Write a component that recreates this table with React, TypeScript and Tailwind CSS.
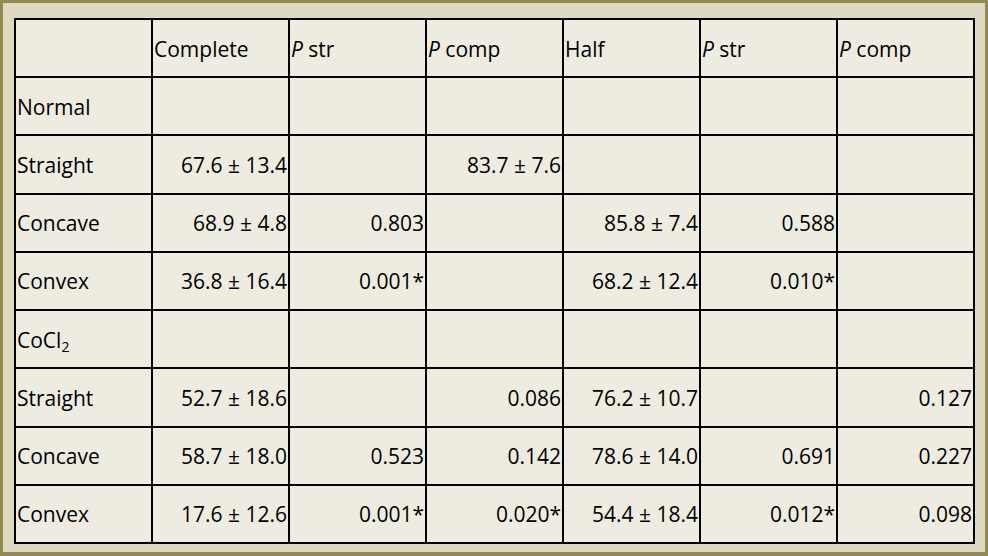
import React from "react";

type Cell = { t: React.ReactNode; r?: boolean };

const P = (s: string) => (
  <>
    <i>P</i> {s}
  </>
);

const rows: Cell[][] = [
  [{ t: "" }, { t: "Complete" }, { t: P("str") }, { t: P("comp") }, { t: "Half" }, { t: P("str") }, { t: P("comp") }],
  [{ t: "Normal" }, { t: "" }, { t: "" }, { t: "" }, { t: "" }, { t: "" }, { t: "" }],
  [{ t: "Straight" }, { t: "67.6 ± 13.4", r: true }, { t: "" }, { t: "83.7 ± 7.6", r: true }, { t: "" }, { t: "" }, { t: "" }],
  [{ t: "Concave" }, { t: "68.9 ± 4.8", r: true }, { t: "0.803", r: true }, { t: "" }, { t: "85.8 ± 7.4", r: true }, { t: "0.588", r: true }, { t: "" }],
  [{ t: "Convex" }, { t: "36.8 ± 16.4", r: true }, { t: "0.001*", r: true }, { t: "" }, { t: "68.2 ± 12.4", r: true }, { t: "0.010*", r: true }, { t: "" }],
  [
    {
      t: (
        <>
          CoCl<sub className="text-[14px] align-baseline relative top-[4px]">2</sub>
        </>
      ),
    },
    { t: "" },
    { t: "" },
    { t: "" },
    { t: "" },
    { t: "" },
    { t: "" },
  ],
  [{ t: "Straight" }, { t: "52.7 ± 18.6", r: true }, { t: "" }, { t: "0.086", r: true }, { t: "76.2 ± 10.7", r: true }, { t: "" }, { t: "0.127", r: true }],
  [{ t: "Concave" }, { t: "58.7 ± 18.0", r: true }, { t: "0.523", r: true }, { t: "0.142", r: true }, { t: "78.6 ± 14.0", r: true }, { t: "0.691", r: true }, { t: "0.227", r: true }],
  [{ t: "Convex" }, { t: "17.6 ± 12.6", r: true }, { t: "0.001*", r: true }, { t: "0.020*", r: true }, { t: "54.4 ± 18.4", r: true }, { t: "0.012*", r: true }, { t: "0.098", r: true }],
];

export default function App() {
  return (
    <div className="w-[988px] h-[556px] bg-[#948a54] pt-[3px] pl-[3px] pr-[3px] pb-[4px]">
      <div className="w-full h-full bg-[#ddd9c3] pl-[11px] pt-[15px]">
        <div
          className="grid grid-cols-[repeat(7,135px)] grid-rows-[repeat(9,56.22px)] gap-[2px] p-[2px] bg-black w-[961px] text-[21px] text-black"
          style={{ fontFamily: "'Open Sans', Lato, sans-serif" }}
        >
          {rows.flatMap((row, i) =>
            row.map((c, j) => (
              <div
                key={`${i}-${j}`}
                className={`bg-[#eeece1] flex items-center px-[1px] leading-none ${c.r ? "justify-end" : "justify-start"}`}
              >
                <span className="whitespace-nowrap relative top-[1px]">{c.t}</span>
              </div>
            ))
          )}
        </div>
      </div>
    </div>
  );
}
